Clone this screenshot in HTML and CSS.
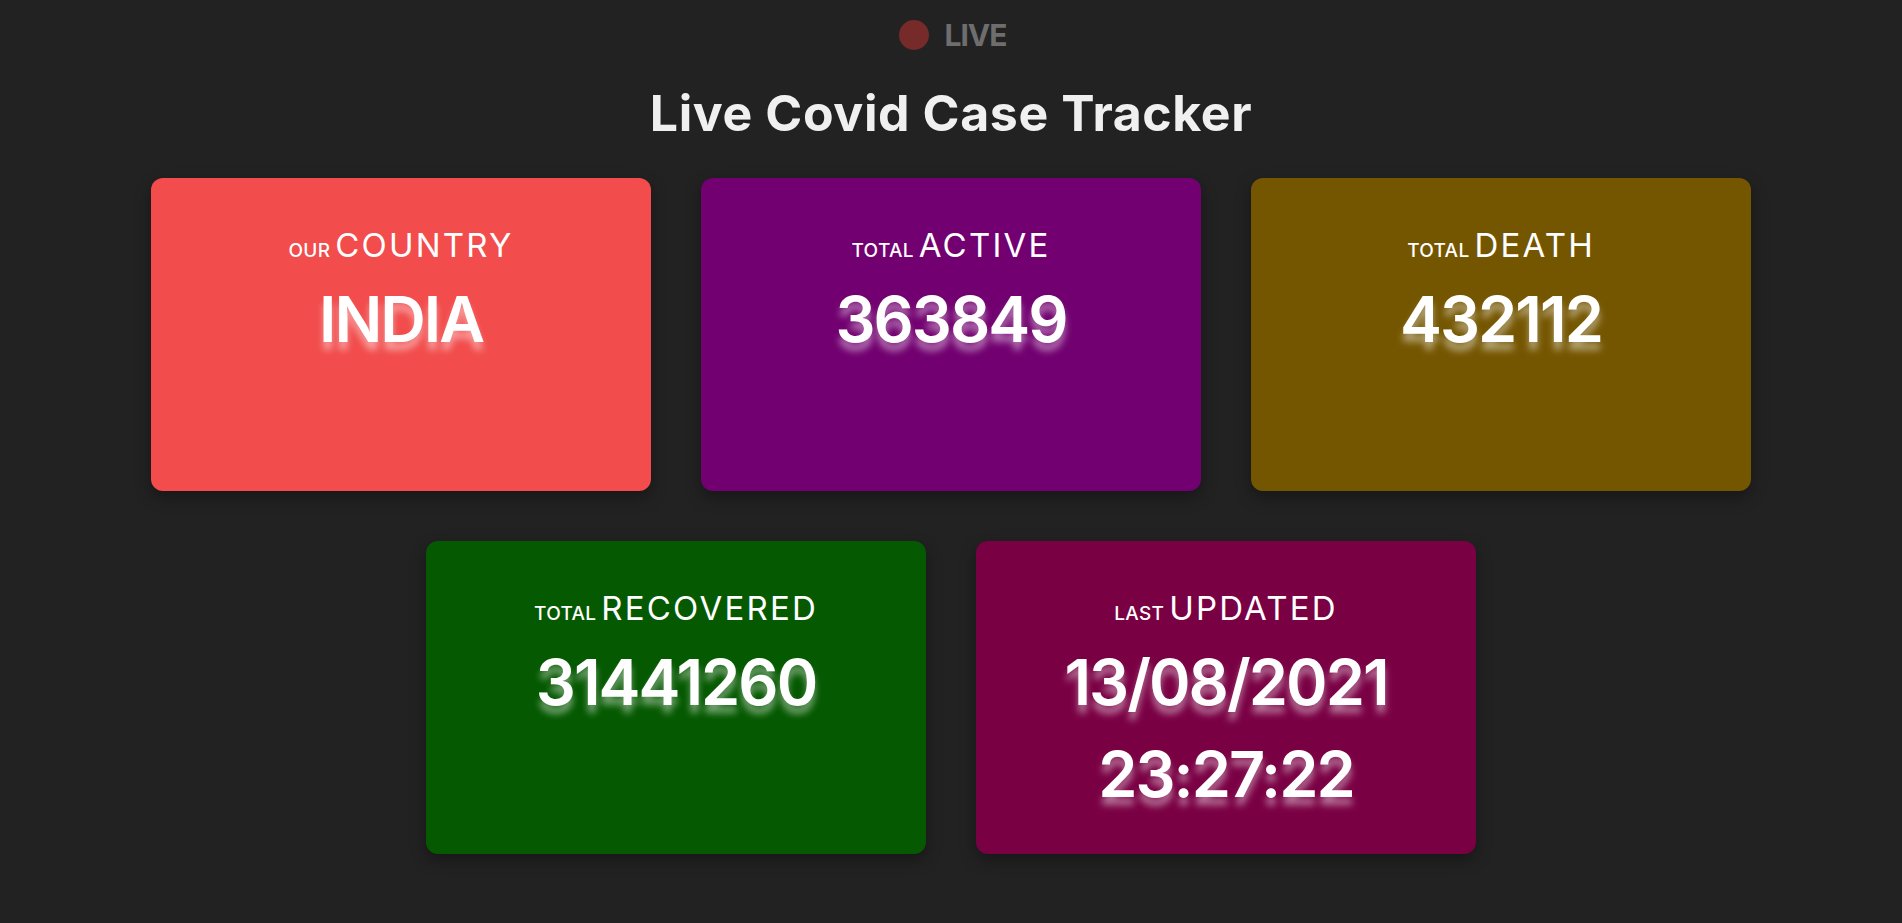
FILE: index.html
```html
<!DOCTYPE html>
<html lang="en">
<head>
<meta charset="utf-8">
<title>Live Covid Case Tracker</title>
<link rel="stylesheet" href="styles.css">
</head>
<body>
  <div class="live">
    <span class="live-dot"></span>
    <span class="live-text">LIVE</span>
  </div>
  <h1 class="title">Live Covid Case Tracker</h1>
  <main class="grid">
    <section class="card card-country">
      <h2 class="label"><span class="small">our</span>COUNTRY</h2>
      <p class="value">INDIA</p>
    </section>
    <section class="card card-active">
      <h2 class="label"><span class="small">total</span>ACTIVE</h2>
      <p class="value">363849</p>
    </section>
    <section class="card card-death">
      <h2 class="label"><span class="small">total</span>DEATH</h2>
      <p class="value">432112</p>
    </section>
    <section class="card card-recovered">
      <h2 class="label"><span class="small">total</span>RECOVERED</h2>
      <p class="value">31441260</p>
    </section>
    <section class="card card-updated">
      <h2 class="label"><span class="small">last</span>UPDATED</h2>
      <p class="value">13/08/2021<br>23:27:22</p>
    </section>
  </main>
</body>
</html>
```

FILE: styles.css
```css
* { box-sizing: border-box; }

html, body {
  margin: 0;
  padding: 0;
}

body {
  background: #222222;
  font-family: Inter, "Noto Sans", "Liberation Sans", sans-serif;
  color: #ffffff;
  height: 923px;
  overflow: hidden;
}

.live {
  display: flex;
  justify-content: center;
  align-items: center;
  gap: 15px;
  height: 30px;
  margin-top: 20px;
  padding-left: 4px;
}

.live-dot {
  width: 30px;
  height: 30px;
  border-radius: 50%;
  background: #772a2a;
}

.live-text {
  font-size: 30px;
  font-weight: 700;
  line-height: 30px;
  color: #6e6e6e;
  letter-spacing: -1px;
}

.title {
  margin: 33px 0 0;
  text-align: center;
  font-size: 50px;
  line-height: 60px;
  font-weight: 700;
  color: #f0f0f0;
  letter-spacing: 0.6px;
}

.grid {
  width: 1600px;
  margin: 35px auto 0;
  display: flex;
  flex-wrap: wrap;
  justify-content: center;
  gap: 50px;
}

.card {
  width: 500px;
  height: 313px;
  border-radius: 12px;
  box-shadow: 0 6px 16px rgba(0, 0, 0, 0.35);
  padding-top: 47px;
  text-align: center;
}

.card-country { background: #f24c4c; }
.card-active { background: #720070; }
.card-death { background: #755600; }
.card-recovered { background: #055900; }
.card-updated { background: #7a0044; }

.label {
  margin: 0;
  font-size: 33px;
  line-height: 40px;
  font-weight: 400;
  letter-spacing: 2.2px;
}

.small {
  font-size: 19px;
  font-weight: 500;
  text-transform: uppercase;
  letter-spacing: 0.3px;
  margin-right: 5px;
}

.value {
  margin: 2px 0 0;
  font-size: 63px;
  line-height: 92px;
  font-weight: 600;
  letter-spacing: -2px;
  text-shadow: 0 8px 7px rgba(255, 255, 255, 0.45);
}
```
